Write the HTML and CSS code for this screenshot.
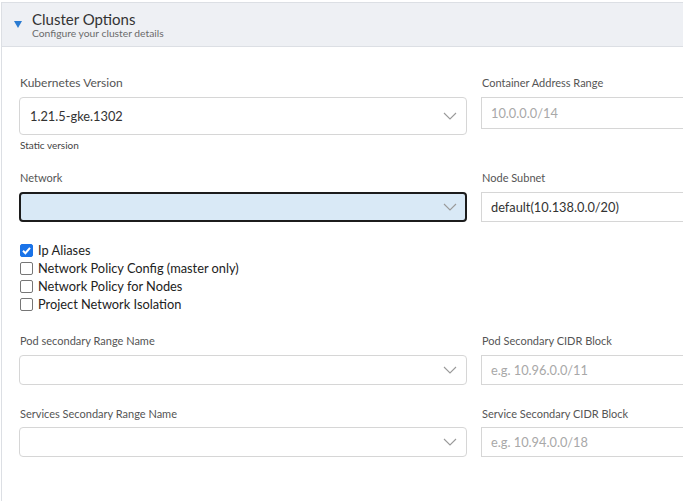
FILE: index.html
```html
<!DOCTYPE html>
<html>
<head>
<meta charset="utf-8">
<link rel="stylesheet" href="styles.css">
</head>
<body>
<div class="panel">
  <div class="panel-head">
    <span class="caret"></span>
    <div class="head-text">
      <div class="title">Cluster Options</div>
      <div class="subtitle">Configure your cluster details</div>
    </div>
  </div>
  <div class="panel-body">
    <div class="row row1">
      <div class="field">
        <div class="label big">Kubernetes Version</div>
        <div class="select tall"><span class="value">1.21.5-gke.1302</span><svg class="chev" width="14" height="8" viewBox="0 0 14 8"><path d="M1 1 L7 7 L13 1" fill="none" stroke="#9a9a9a" stroke-width="1.1"/></svg></div>
        <div class="help">Static version</div>
      </div>
      <div class="field">
        <div class="label">Container Address Range</div>
        <div class="input"><span class="placeholder">10.0.0.0/14</span></div>
      </div>
    </div>
    <div class="row row2">
      <div class="field">
        <div class="label">Network</div>
        <div class="select focused"><span class="value"></span><svg class="chev" width="14" height="8" viewBox="0 0 14 8"><path d="M1 1 L7 7 L13 1" fill="none" stroke="#9a9a9a" stroke-width="1.1"/></svg></div>
      </div>
      <div class="field">
        <div class="label">Node Subnet</div>
        <div class="input"><span class="value">default(10.138.0.0/20)</span></div>
      </div>
    </div>
    <div class="checks">
      <div class="check"><span class="box checked"><svg width="13" height="13" viewBox="0 0 13 13"><path d="M3 6.8 L5.4 9.2 L10 3.8" fill="none" stroke="#fff" stroke-width="2"/></svg></span>Ip Aliases</div>
      <div class="check"><span class="box"></span>Network Policy Config (master only)</div>
      <div class="check"><span class="box"></span>Network Policy for Nodes</div>
      <div class="check"><span class="box"></span>Project Network Isolation</div>
    </div>
    <div class="row row3">
      <div class="field">
        <div class="label">Pod secondary Range Name</div>
        <div class="select"><span class="value"></span><svg class="chev" width="14" height="8" viewBox="0 0 14 8"><path d="M1 1 L7 7 L13 1" fill="none" stroke="#9a9a9a" stroke-width="1.1"/></svg></div>
      </div>
      <div class="field">
        <div class="label">Pod Secondary CIDR Block</div>
        <div class="input"><span class="placeholder">e.g. 10.96.0.0/11</span></div>
      </div>
    </div>
    <div class="row row4">
      <div class="field">
        <div class="label">Services Secondary Range Name</div>
        <div class="select"><span class="value"></span><svg class="chev" width="14" height="8" viewBox="0 0 14 8"><path d="M1 1 L7 7 L13 1" fill="none" stroke="#9a9a9a" stroke-width="1.1"/></svg></div>
      </div>
      <div class="field">
        <div class="label">Service Secondary CIDR Block</div>
        <div class="input"><span class="placeholder">e.g. 10.94.0.0/18</span></div>
      </div>
    </div>
  </div>
</div>
</body>
</html>
```

FILE: styles.css
```css
html, body {
  margin: 0;
  padding: 0;
  background: #fff;
  overflow: hidden;
}
body {
  font-family: Lato, "Noto Sans", sans-serif;
  color: #333;
  width: 683px;
  height: 501px;
}
.panel {
  margin: 2px 0 0 1px;
  width: 1000px;
  height: 520px;
  border-left: 1px solid #dcdfe4;
  border-top: 1px solid #dcdfe4;
}
.panel-head {
  height: 43px;
  background: #eef0f4;
  border-bottom: 1px solid #dcdfe4;
  display: flex;
  align-items: flex-start;
}
.caret {
  width: 0;
  height: 0;
  border-left: 4.5px solid transparent;
  border-right: 4.5px solid transparent;
  border-top: 7px solid #2a7bd2;
  margin: 18px 0 0 12px;
}
.head-text {
  margin: 7px 0 0 10px;
}
.title {
  font-size: 15px;
  line-height: 18px;
  color: #333;
}
.subtitle {
  font-size: 10.3px;
  line-height: 12px;
  color: #6b6b6b;
  margin-top: -1px;
}
.panel-body {
  padding: 28px 0 0 17px;
}
.row {
  display: grid;
  grid-template-columns: 448px 448px;
  column-gap: 14px;
  align-items: start;
}
.label {
  font-size: 11px;
  line-height: 16px;
  color: #555;
  margin-bottom: 6px;
  padding-left: 1px;
}
.label.big {
  font-size: 12px;
}
.select {
  box-sizing: border-box;
  height: 30px;
  border: 1px solid #d6d6d6;
  border-radius: 4px;
  display: flex;
  align-items: center;
  justify-content: space-between;
  padding: 0 9px 0 10px;
  background: #fff;
}
.select.tall {
  height: 38px;
}
.select.focused {
  border: 2px solid #1c1c1c;
  background: #d9e9f6;
  padding: 0 8px 0 9px;
}
.value {
  font-size: 12.8px;
  color: #333;
}
.input {
  box-sizing: border-box;
  height: 30px;
  border: 1px solid #d6d6d6;
  display: flex;
  align-items: center;
  padding: 0 9px;
}
.row1 .input {
  height: 32px;
}
.placeholder {
  font-size: 12.8px;
  color: #a8a8a8;
}
.help {
  font-size: 10px;
  line-height: 14px;
  color: #444;
  margin-top: 3px;
  padding-left: 1px;
}
.row2 {
  margin-top: 18px;
}
.checks {
  margin-top: 19px;
  margin-left: 1px;
}
.check {
  display: flex;
  align-items: center;
  height: 18px;
  font-size: 12.8px;
  color: #222;
}
.box {
  box-sizing: border-box;
  width: 13px;
  height: 13px;
  border: 1px solid #767676;
  border-radius: 2px;
  margin-right: 5px;
  background: #fff;
  display: flex;
}
.box.checked {
  background: #1a73e8;
  border-color: #1a73e8;
}
.box.checked svg {
  margin: -1px;
}
.row3 {
  margin-top: 20px;
}
.row4 {
  margin-top: 21px;
}
.row4 .label {
  margin-bottom: 5px;
}
```
